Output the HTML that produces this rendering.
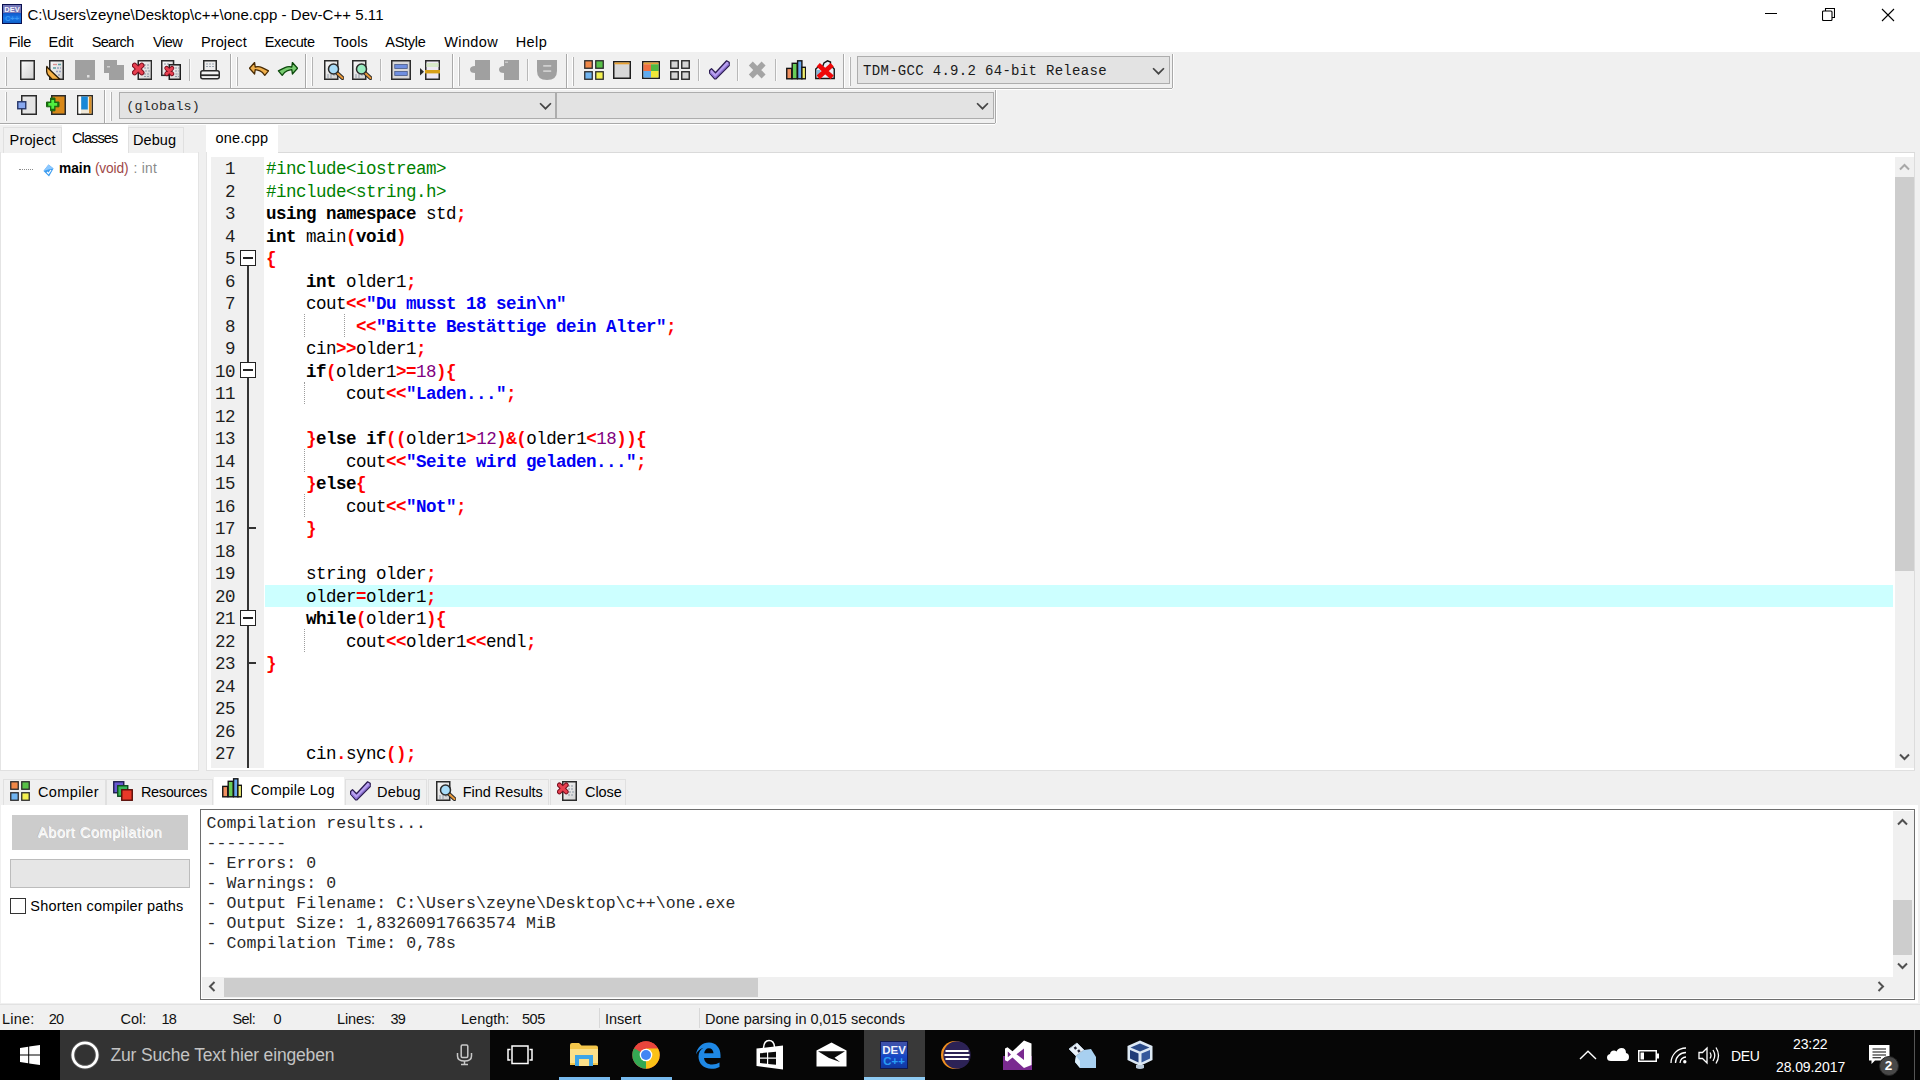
<!DOCTYPE html>
<html>
<head>
<meta charset="utf-8">
<title>Dev-C++</title>
<style>
*{box-sizing:border-box;margin:0;padding:0}
html,body{width:1920px;height:1080px;overflow:hidden;background:#f0f0f0;font-family:"Liberation Sans",sans-serif;color:#000}
.abs{position:absolute}
#titlebar{position:absolute;left:0;top:0;width:1920px;height:30px;background:#fff}
#menubar{position:absolute;left:0;top:30px;width:1920px;height:22px;background:#fff}
.t{position:absolute;white-space:pre;font-size:14.5px;line-height:18px;color:#000}
.combo{position:absolute;background:#e3e3e3;border:1px solid #adadad;font-family:"Liberation Mono",monospace;white-space:nowrap}
#leftpanel{position:absolute;left:1px;top:153px;width:197px;height:617px;background:#fff}
#editor{position:absolute;left:207px;top:153px;width:1707px;height:617px;background:#fff}
#gutter{position:absolute;left:211px;top:157px;width:53px;height:611px;background:#f0f0f0}
.ln{position:absolute;left:0;width:1627px;height:22.5px;font-family:"Liberation Mono",monospace;font-size:17.5px;letter-spacing:-0.5px;line-height:22.5px;white-space:pre}
.no{position:absolute;left:-55px;top:1.2px;width:24px;text-align:right;color:#1e1e1e}
.code{position:absolute;left:0;top:1.2px}
.k{font-weight:bold}
.s{color:#f00;font-weight:bold}
.p{color:#008000}
.q{color:#0000f4;font-weight:bold}
.n{color:#800080}
#taskbar{position:absolute;left:0;top:1030px;width:1920px;height:50px;background:#060606}
#statusbar{position:absolute;left:0;top:1005px;width:1920px;height:25px;background:#f0f0f0}
.log{position:absolute;left:206.5px;font-family:"Liberation Mono",monospace;font-size:16.5px;letter-spacing:0.08px;line-height:20px;white-space:pre;color:#2a2a2a}
</style>
</head>
<body>

<!-- TITLE + MENU -->
<div id="titlebar"></div><div id="menubar"></div>
<svg class="abs" style="left:2px;top:4px" width="20" height="20" viewBox="0 0 20 20"><defs><linearGradient id="gdev" x1="0" y1="0" x2="0" y2="1"><stop offset="0" stop-color="#1058c8"/><stop offset="0.5" stop-color="#1878e8"/><stop offset="1" stop-color="#1060c8"/></linearGradient></defs><rect width="20" height="20" fill="#0a1050"/><rect x="1" y="1" width="18" height="8" fill="#7478b8"/><rect x="1" y="9" width="18" height="10" fill="url(#gdev)"/><text x="10" y="8" font-family="Liberation Sans" font-weight="bold" font-size="7.5" fill="#f4f6ff" text-anchor="middle">DEV</text><text x="10" y="16.500" font-family="Liberation Sans" font-weight="bold" font-size="7.5" fill="#3c98f4" text-anchor="middle">C++</text></svg>
<div class="t" style="left:27.5px;top:6.2px;font-size:15px;letter-spacing:0.04px">C:\Users\zeyne\Desktop\c++\one.cpp - Dev-C++ 5.11</div>
<div class="abs" style="left:1765px;top:13px;width:12px;height:1px;background:#000"></div>
<svg class="abs" style="left:1822px;top:8px" width="13" height="13" viewBox="0 0 13 13"><path d="M3.500 3 V0.5 H12.500 V9.500 H10" fill="none" stroke="#000" stroke-width="1.1"/><rect x="0.5" y="3" width="9.5" height="9.5" rx="1" fill="none" stroke="#000" stroke-width="1.1"/></svg>
<svg class="abs" style="left:1881px;top:8px" width="14" height="14" viewBox="0 0 14 14"><path d="M1 1 L13 13 M13 1 L1 13" stroke="#000" stroke-width="1.1"/></svg>
<div class="t" style="left:8.7px;top:32.6px;letter-spacing:-0.27px">File</div>
<div class="t" style="left:48.5px;top:32.6px;letter-spacing:-0.05px">Edit</div>
<div class="t" style="left:91.7px;top:32.6px;letter-spacing:-0.68px">Search</div>
<div class="t" style="left:153px;top:32.6px;letter-spacing:-0.47px">View</div>
<div class="t" style="left:201px;top:32.6px;letter-spacing:0.1px">Project</div>
<div class="t" style="left:264.8px;top:32.6px;letter-spacing:-0.35px">Execute</div>
<div class="t" style="left:333.3px;top:32.6px;letter-spacing:0.15px">Tools</div>
<div class="t" style="left:385.3px;top:32.6px;letter-spacing:-0.27px">AStyle</div>
<div class="t" style="left:444.2px;top:32.6px;letter-spacing:0.4px">Window</div>
<div class="t" style="left:515.7px;top:32.6px;letter-spacing:0.41px">Help</div>

<!-- TOOLBARS -->
<svg width="0" height="0" style="position:absolute">
<defs>
<linearGradient id="gpage" x1="0" y1="0" x2="1" y2="1"><stop offset="0" stop-color="#fafafa"/><stop offset="1" stop-color="#cfcfcf"/></linearGradient>
<symbol id="i-new" viewBox="0 0 20 20"><rect x="0.75" y="0.75" width="13.5" height="18.5" fill="url(#gpage)" stroke="#2b2b2b" stroke-width="1.5"/></symbol>
<symbol id="i-open" viewBox="0 0 20 20"><rect x="3.750" y="0.750" width="13.500" height="18.500" fill="url(#gpage)" stroke="#2b2b2b" stroke-width="1.500"/><path d="M7 4.500h4" stroke="#d89090" stroke-width="1.300"/><path d="M12 4.500h3M7 8h3" stroke="#58a0a0" stroke-width="1.300"/><path d="M11 8h4M10 11.500h5M12 15h3" stroke="#98a0c0" stroke-width="1.300" stroke-dasharray="2 1"/><path d="M0.800 6.500 Q0 11 1.500 14.500 L6 19.300 L13.800 19.300 L2.200 8.200 Z" fill="#f4b048" stroke="#2a1a04" stroke-width="1.300" stroke-linejoin="round"/></symbol>
<symbol id="i-save" viewBox="0 0 20 20"><rect x="0" y="0" width="20" height="20" fill="#a0a0a0"/><rect x="12" y="15" width="2.5" height="2.5" fill="#e0e0e0"/></symbol>
<symbol id="i-saveall" viewBox="0 0 20 20"><rect x="0" y="0" width="13" height="13" fill="#a0a0a0"/><rect x="5" y="5" width="15" height="15" fill="#a0a0a0"/><rect x="3" y="6" width="3" height="1.5" fill="#d0d0d0"/></symbol>
<symbol id="i-close" viewBox="0 0 20 20"><rect x="6.250" y="0.750" width="13.200" height="18.500" fill="url(#gpage)" stroke="#2b2b2b" stroke-width="1.500"/><path d="M12 5h6M12 8h6M13 11h5M12 14h6M12 16.500h6" stroke="#8e9aa8" stroke-width="1.200" stroke-dasharray="2 1"/><path d="M2.600 5.400 L9.800 12.600 M9.800 5.400 L2.600 12.600" stroke="#7a1020" stroke-width="5.400" stroke-linecap="round"/><path d="M2.600 5.400 L9.800 12.600 M9.800 5.400 L2.600 12.600" stroke="#e84050" stroke-width="3.400" stroke-linecap="round"/></symbol>
<symbol id="i-closeall" viewBox="0 0 20 20"><rect x="0.750" y="0.750" width="11.800" height="14.600" fill="url(#gpage)" stroke="#2b2b2b" stroke-width="1.500"/><path d="M3 4h6" stroke="#8e9aa8" stroke-width="1.100" stroke-dasharray="2 1"/><rect x="8.300" y="4.800" width="11" height="14.500" fill="url(#gpage)" stroke="#1e1e1e" stroke-width="1.500"/><path d="M14 8h4M14 11h4M14.500 14h3.500M14 16.500h4" stroke="#8e9aa8" stroke-width="1.100" stroke-dasharray="2 1"/><path d="M5.600 8.200 L11 13.800 M11 8.200 L5.600 13.800" stroke="#7a1020" stroke-width="4.600" stroke-linecap="round"/><path d="M5.600 8.200 L11 13.800 M11 8.200 L5.600 13.800" stroke="#e84050" stroke-width="2.800" stroke-linecap="round"/></symbol>
<symbol id="i-print" viewBox="0 0 20 20"><rect x="3.75" y="0.75" width="12.5" height="10" fill="#ececec" stroke="#2b2b2b" stroke-width="1.5"/><path d="M6 4h8M6 6.5h8" stroke="#9aa4b0" stroke-width="1.1" stroke-dasharray="2 1"/><rect x="0.75" y="10.75" width="18.5" height="8" rx="2" fill="#f4f4f4" stroke="#2b2b2b" stroke-width="1.5"/><path d="M1 15.2h18" stroke="#2b2b2b" stroke-width="1.8"/></symbol>
<symbol id="i-undo" viewBox="0 0 20 14"><path d="M0.4 6.200 L5.600 0.500 L6.200 5 Q10 4.200 13 5.600 T19.600 8.800 L15.800 13.300 Q13.500 9.600 11 8.800 T6.200 7.600 L5.600 12 Z" fill="#f0b04c" stroke="#4a2c04" stroke-width="1.300" stroke-linejoin="round"/></symbol>
<symbol id="i-redo" viewBox="0 0 21 14"><path d="M20.600 6.200 L15.400 0.500 L14.800 5 Q11 4.200 8 5.600 T1.400 8.800 L5.200 13.300 Q7.500 9.600 10 8.800 T14.800 7.600 L15.400 12 Z" fill="#78cc70" stroke="#0c4a0c" stroke-width="1.300" stroke-linejoin="round"/></symbol>
<symbol id="i-find" viewBox="0 0 20 20"><rect x="0.75" y="0.75" width="13" height="18.5" fill="url(#gpage)" stroke="#2b2b2b" stroke-width="1.5"/><path d="M3 15h8M3 17h6" stroke="#8e9aa8" stroke-width="1.2" stroke-dasharray="2 1"/><path d="M12.5 12.5 L18.5 18" stroke="#2b2b2b" stroke-width="4" stroke-linecap="round"/><path d="M12.5 12.5 L18.5 18" stroke="#e89838" stroke-width="2" stroke-linecap="round"/><circle cx="9.5" cy="9" r="5" fill="#a8dcf8" stroke="#2b2b2b" stroke-width="1.5"/></symbol>
<symbol id="i-repl" viewBox="0 0 20 20"><rect x="0.75" y="0.75" width="13" height="18.5" fill="url(#gpage)" stroke="#2b2b2b" stroke-width="1.5"/><path d="M3 15h8M3 17h6" stroke="#8e9aa8" stroke-width="1.2" stroke-dasharray="2 1"/><path d="M12.5 12.5 L18.5 18" stroke="#2b2b2b" stroke-width="4" stroke-linecap="round"/><path d="M12.5 12.5 L18.5 18" stroke="#e89838" stroke-width="2" stroke-linecap="round"/><circle cx="9.5" cy="9" r="5" fill="#98ecc0" stroke="#2b2b2b" stroke-width="1.5"/></symbol>
<symbol id="i-gfunc" viewBox="0 0 20 20"><rect x="0.75" y="0.75" width="18.5" height="18.5" fill="#d8d8d8" stroke="#2b2b2b" stroke-width="1.5"/><rect x="3.75" y="4.5" width="12.5" height="4" fill="#6f8fe0" stroke="#485a88" stroke-width="0.8"/><rect x="3.75" y="11.5" width="12.5" height="4" fill="#6f8fe0" stroke="#485a88" stroke-width="0.8"/></symbol>
<symbol id="i-gline" viewBox="0 0 20 20"><rect x="5.75" y="0.75" width="13.5" height="18.5" fill="#eee8f4" stroke="#2b2b2b" stroke-width="1.5"/><rect x="6.5" y="3" width="12" height="4" fill="#d8e8c8"/><rect x="5" y="10" width="15" height="3.4" fill="#d8a018"/><path d="M0 8 L4 11.7 L0 15.5 Z" fill="#2b2b2b"/></symbol>
<symbol id="i-g1" viewBox="0 0 20 20"><path d="M5 0h15v20H5v-7Q0 13 0 9.5 0 6 5 6Z" fill="#a0a0a0"/></symbol>
<symbol id="i-g2" viewBox="0 0 20 20"><path d="M5 0h15v20H5v-7Q0 13 0 9.5 0 6 5 6Z" fill="#a0a0a0"/><rect x="6" y="1.5" width="3" height="1.5" fill="#c8c8c8"/></symbol>
<symbol id="i-g3" viewBox="0 0 20 20"><path d="M0 0h20v11Q20 20 10 20 0 20 0 11Z" fill="#a0a0a0"/><path d="M6.200 5.800h8M6.200 11.200h8" stroke="#cfcfcf" stroke-width="1.800"/></symbol>
<symbol id="i-comp" viewBox="0 0 20 20"><rect x="0.75" y="0.75" width="7.5" height="7.5" fill="#f08848" stroke="#2b2b2b" stroke-width="1.3"/><rect x="11.75" y="0.75" width="7.500" height="7.5" fill="#58c048" stroke="#2b2b2b" stroke-width="1.3"/><rect x="0.75" y="11.75" width="7.5" height="7.500" fill="#70b4f0" stroke="#2b2b2b" stroke-width="1.3"/><rect x="11.75" y="11.75" width="7.5" height="7.5" fill="#f4f050" stroke="#2b2b2b" stroke-width="1.3"/></symbol>
<symbol id="i-run" viewBox="0 0 18 18"><rect x="0.75" y="0.75" width="16.5" height="16.5" fill="#d8d8d8" stroke="#1e1e1e" stroke-width="1.5"/><rect x="1.5" y="1.5" width="15" height="1.8" fill="#e8a030"/></symbol>
<symbol id="i-crun" viewBox="0 0 18 18"><rect x="0.75" y="0.75" width="16.5" height="16.500" fill="#d8d8d8" stroke="#1e1e1e" stroke-width="1.5"/><rect x="1.5" y="1.5" width="15" height="1.8" fill="#e8a030"/><rect x="1.5" y="3.3" width="7.5" height="6.7" fill="#f07040"/><rect x="9" y="3.3" width="7.5" height="6.7" fill="#50b840"/><rect x="1.5" y="10" width="7.5" height="6.5" fill="#60acf0"/><rect x="9" y="10" width="7.5" height="6.5" fill="#f0e838"/></symbol>
<symbol id="i-reb" viewBox="0 0 20 20"><rect x="0.750" y="0.75" width="7.5" height="7.5" fill="#d4d4d4" stroke="#2b2b2b" stroke-width="1.4"/><rect x="11.75" y="0.75" width="7.5" height="7.5" fill="#d4d4d4" stroke="#2b2b2b" stroke-width="1.4"/><rect x="0.75" y="11.75" width="7.5" height="7.5" fill="#d4d4d4" stroke="#2b2b2b" stroke-width="1.4"/><rect x="11.75" y="11.750" width="7.5" height="7.5" fill="#d4d4d4" stroke="#2b2b2b" stroke-width="1.4"/></symbol>
<symbol id="i-check" viewBox="0 0 21 20"><path d="M0.600 10.500 L2.500 8.600 L6.500 12.800 L17.600 0.800 L20.200 2.200 L20.200 5.500 L7 18.800 L5.600 18.800 L0.600 13 Z" fill="#b8a0f0" stroke="#2a1a50" stroke-width="1.300" stroke-linejoin="round"/><path d="M1 12.600 L6.200 17.600 L20 4" fill="none" stroke="#8a70d0" stroke-width="1.200"/></symbol>
<symbol id="i-gx" viewBox="0 0 18 18"><path d="M2.800 2.600 L15.600 15.400 M15.600 2.600 L2.800 15.400" stroke="#a4a4a4" stroke-width="5.600"/></symbol>
<symbol id="i-bars" viewBox="0 0 20 20"><rect x="0.750" y="8.400" width="5" height="10.400" fill="#f09060" stroke="#141414" stroke-width="1.400"/><rect x="6.200" y="3.300" width="5" height="15.500" fill="#68cc58" stroke="#141414" stroke-width="1.400"/><rect x="11.600" y="0.800" width="4.300" height="18" fill="#68a8f0" stroke="#141414" stroke-width="1.400"/><rect x="15.900" y="7.300" width="3.700" height="11.500" fill="#f0f070" stroke="#141414" stroke-width="1.400"/></symbol>
<symbol id="i-rx" viewBox="0 0 20 20"><path d="M0.750 18.500 V9 L4.500 5.800 L7 8 L9 3 L12.500 0.800 L15.500 2 V5 L19.250 9 V18.500 Z" fill="#e8eef4" stroke="#141414" stroke-width="1.400"/><rect x="1.500" y="10" width="4" height="6" fill="#88b8d8"/><path d="M3.200 4.800 L17.200 17.400 M17.200 4.800 L3.200 17.400" stroke="#ee0808" stroke-width="4.800"/></symbol>
<symbol id="i-chev" viewBox="0 0 12 8"><path d="M1 1 L6 6 L11 1" fill="none" stroke="#444" stroke-width="1.6"/></symbol>
<symbol id="i-t1" viewBox="0 0 20 20"><rect x="4.75" y="0.75" width="14.5" height="18.5" fill="#e4e4e4" stroke="#2b2b2b" stroke-width="1.5"/><rect x="0.75" y="6.75" width="8" height="7" fill="#88a8f0" stroke="#28386a" stroke-width="1.4"/></symbol>
<symbol id="i-t2" viewBox="0 0 20 20"><rect x="5.75" y="0.75" width="13.5" height="18.5" fill="#d88818" stroke="#2b2b2b" stroke-width="1.5"/><path d="M0.500 7 H4.500 V3 H9 V7 H13 V11.800 H9 V15.800 H4.500 V11.800 H0.500 Z" fill="#1a6a10" stroke="#1a6a10" stroke-width="1" stroke-linejoin="round"/><path d="M2.300 9.400 H11.200 M6.750 5 V13.800" stroke="#50f040" stroke-width="2.800"/></symbol>
<symbol id="i-t3" viewBox="0 0 16 20"><rect x="0.75" y="0.75" width="14.5" height="18.5" fill="#f0e8d8" stroke="#2b2b2b" stroke-width="1.5"/><rect x="1.500" y="1.500" width="2.500" height="17" fill="#ffffff"/><rect x="12" y="1.500" width="2.500" height="17" fill="#d89028"/><rect x="4.200" y="1.500" width="6.600" height="13" fill="#1888d8"/></symbol>
<symbol id="i-res" viewBox="0 0 20 20"><rect x="0.75" y="0.75" width="10" height="11" fill="#6858d0" stroke="#1e1e50" stroke-width="1.4"/><rect x="4.75" y="4.75" width="10" height="10.5" fill="#38b858" stroke="#0e4a1e" stroke-width="1.4"/><rect x="8.750" y="8.75" width="10.5" height="10.5" fill="#e83828" stroke="#5a0e08" stroke-width="1.4"/></symbol>
<symbol id="i-close2" viewBox="0 0 20 20"><rect x="5.75" y="0.75" width="13.5" height="18.5" fill="url(#gpage)" stroke="#2b2b2b" stroke-width="1.5"/><path d="M11 5h6M11 8h6M12 11h5M11 14h6" stroke="#8e9aa8" stroke-width="1.2" stroke-dasharray="2 1"/><path d="M2.400 4 L9.200 10.800 M9.200 4 L2.400 10.800" stroke="#7a1020" stroke-width="5" stroke-linecap="round"/><path d="M2.400 4 L9.200 10.800 M9.200 4 L2.400 10.800" stroke="#e84050" stroke-width="3" stroke-linecap="round"/></symbol>
</defs>
</svg>

<div class="abs" style="left:5px;top:57px;width:1px;height:29px;background:#fff"></div>
<div class="abs" style="left:6px;top:57px;width:1px;height:29px;background:#b4b4b4"></div>
<div class="abs" style="left:230px;top:54px;width:1px;height:34px;background:#a9a9a9"></div>
<div class="abs" style="left:231px;top:54px;width:1px;height:34px;background:#fff"></div>
<div class="abs" style="left:236px;top:57px;width:1px;height:29px;background:#fff"></div>
<div class="abs" style="left:237px;top:57px;width:1px;height:29px;background:#b4b4b4"></div>
<div class="abs" style="left:305px;top:54px;width:1px;height:34px;background:#a9a9a9"></div>
<div class="abs" style="left:306px;top:54px;width:1px;height:34px;background:#fff"></div>
<div class="abs" style="left:311px;top:57px;width:1px;height:29px;background:#fff"></div>
<div class="abs" style="left:312px;top:57px;width:1px;height:29px;background:#b4b4b4"></div>
<div class="abs" style="left:452px;top:54px;width:1px;height:34px;background:#a9a9a9"></div>
<div class="abs" style="left:453px;top:54px;width:1px;height:34px;background:#fff"></div>
<div class="abs" style="left:458px;top:57px;width:1px;height:29px;background:#fff"></div>
<div class="abs" style="left:459px;top:57px;width:1px;height:29px;background:#b4b4b4"></div>
<div class="abs" style="left:566px;top:54px;width:1px;height:34px;background:#a9a9a9"></div>
<div class="abs" style="left:567px;top:54px;width:1px;height:34px;background:#fff"></div>
<div class="abs" style="left:572px;top:57px;width:1px;height:29px;background:#fff"></div>
<div class="abs" style="left:573px;top:57px;width:1px;height:29px;background:#b4b4b4"></div>
<div class="abs" style="left:843px;top:54px;width:1px;height:34px;background:#a9a9a9"></div>
<div class="abs" style="left:844px;top:54px;width:1px;height:34px;background:#fff"></div>
<div class="abs" style="left:849px;top:57px;width:1px;height:29px;background:#fff"></div>
<div class="abs" style="left:850px;top:57px;width:1px;height:29px;background:#b4b4b4"></div>
<div class="abs" style="left:1172px;top:54px;width:1px;height:34px;background:#a9a9a9"></div>
<div class="abs" style="left:1173px;top:54px;width:1px;height:34px;background:#fff"></div>
<div class="abs" style="left:0px;top:88px;width:1172px;height:1px;background:#a9a9a9"></div>
<div class="abs" style="left:0px;top:89px;width:1172px;height:1px;background:#fff"></div>
<svg class="abs" style="left:20px;top:60px" width="20" height="20"><use href="#i-new"/></svg>
<svg class="abs" style="left:46px;top:60px" width="20" height="20"><use href="#i-open"/></svg>
<svg class="abs" style="left:75px;top:60px" width="20" height="20"><use href="#i-save"/></svg>
<svg class="abs" style="left:104px;top:60px" width="20" height="20"><use href="#i-saveall"/></svg>
<svg class="abs" style="left:132px;top:60px" width="20" height="20"><use href="#i-close"/></svg>
<svg class="abs" style="left:161px;top:60px" width="20" height="20"><use href="#i-closeall"/></svg>
<div class="abs" style="left:189px;top:59px;width:1px;height:22px;background:#b8b8b8"></div>
<div class="abs" style="left:190px;top:59px;width:1px;height:22px;background:#fafafa"></div>
<svg class="abs" style="left:200px;top:60px" width="20" height="20"><use href="#i-print"/></svg>
<svg class="abs" style="left:249px;top:62px" width="20" height="14"><use href="#i-undo"/></svg>
<svg class="abs" style="left:277px;top:62px" width="21" height="14"><use href="#i-redo"/></svg>
<svg class="abs" style="left:324px;top:60px" width="20" height="20"><use href="#i-find"/></svg>
<svg class="abs" style="left:352px;top:60px" width="20" height="20"><use href="#i-repl"/></svg>
<div class="abs" style="left:380px;top:59px;width:1px;height:22px;background:#b8b8b8"></div>
<div class="abs" style="left:381px;top:59px;width:1px;height:22px;background:#fafafa"></div>
<svg class="abs" style="left:391px;top:60px" width="20" height="20"><use href="#i-gfunc"/></svg>
<svg class="abs" style="left:420px;top:60px" width="20" height="20"><use href="#i-gline"/></svg>
<svg class="abs" style="left:470px;top:60px" width="20" height="20"><use href="#i-g1"/></svg>
<svg class="abs" style="left:499px;top:60px" width="20" height="20"><use href="#i-g2"/></svg>
<div class="abs" style="left:527px;top:59px;width:1px;height:22px;background:#b8b8b8"></div>
<div class="abs" style="left:528px;top:59px;width:1px;height:22px;background:#fafafa"></div>
<svg class="abs" style="left:537px;top:60px" width="20" height="20"><use href="#i-g3"/></svg>
<svg class="abs" style="left:584px;top:60px" width="20" height="20"><use href="#i-comp"/></svg>
<svg class="abs" style="left:613px;top:61px" width="18" height="18"><use href="#i-run"/></svg>
<svg class="abs" style="left:642px;top:61px" width="18" height="18"><use href="#i-crun"/></svg>
<svg class="abs" style="left:670px;top:60px" width="20" height="20"><use href="#i-reb"/></svg>
<div class="abs" style="left:698px;top:59px;width:1px;height:22px;background:#b8b8b8"></div>
<div class="abs" style="left:699px;top:59px;width:1px;height:22px;background:#fafafa"></div>
<svg class="abs" style="left:709px;top:60px" width="21" height="20"><use href="#i-check"/></svg>
<div class="abs" style="left:737px;top:59px;width:1px;height:22px;background:#b8b8b8"></div>
<div class="abs" style="left:738px;top:59px;width:1px;height:22px;background:#fafafa"></div>
<svg class="abs" style="left:748px;top:61px" width="18" height="18"><use href="#i-gx"/></svg>
<div class="abs" style="left:775px;top:59px;width:1px;height:22px;background:#b8b8b8"></div>
<div class="abs" style="left:776px;top:59px;width:1px;height:22px;background:#fafafa"></div>
<svg class="abs" style="left:786px;top:60px" width="20" height="20"><use href="#i-bars"/></svg>
<svg class="abs" style="left:815px;top:60px" width="20" height="20"><use href="#i-rx"/></svg>
<div class="combo" style="left:857px;top:56px;width:313px;height:28px;font-size:14px;letter-spacing:0.31px;line-height:28.5px;padding-left:5px;color:#1a1a1a">TDM-GCC 4.9.2 64-bit Release</div>
<svg class="abs" style="left:1152px;top:67px" width="13" height="9"><use href="#i-chev"/></svg>
<div class="abs" style="left:5px;top:92px;width:1px;height:29px;background:#fff"></div>
<div class="abs" style="left:6px;top:92px;width:1px;height:29px;background:#b4b4b4"></div>
<div class="abs" style="left:104px;top:90px;width:1px;height:33px;background:#a9a9a9"></div>
<div class="abs" style="left:105px;top:90px;width:1px;height:33px;background:#fff"></div>
<div class="abs" style="left:110px;top:92px;width:1px;height:29px;background:#fff"></div>
<div class="abs" style="left:111px;top:92px;width:1px;height:29px;background:#b4b4b4"></div>
<div class="abs" style="left:995px;top:90px;width:1px;height:33px;background:#a9a9a9"></div>
<div class="abs" style="left:996px;top:90px;width:1px;height:33px;background:#fff"></div>
<div class="abs" style="left:0px;top:123px;width:995px;height:1px;background:#a9a9a9"></div>
<div class="abs" style="left:0px;top:124px;width:995px;height:1px;background:#fff"></div>
<svg class="abs" style="left:17px;top:95px" width="20" height="20"><use href="#i-t1"/></svg>
<svg class="abs" style="left:46px;top:95px" width="20" height="20"><use href="#i-t2"/></svg>
<svg class="abs" style="left:77px;top:95px" width="16" height="20"><use href="#i-t3"/></svg>
<div class="combo" style="left:119px;top:92px;width:437px;height:27px;font-size:13.4px;letter-spacing:0.15px;line-height:28px;padding-left:6.300px;color:#2a2a2a">(globals)</div>
<div class="combo" style="left:556px;top:92px;width:438px;height:27px"></div>
<svg class="abs" style="left:539px;top:102px" width="13" height="9"><use href="#i-chev"/></svg>
<svg class="abs" style="left:976px;top:102px" width="13" height="9"><use href="#i-chev"/></svg>

<!-- PANELS -->
<div id="leftpanel"></div><div id="editor"></div><div id="gutter"></div>
<div class="abs" style="left:3px;top:127px;width:59px;height:26px;background:#f0f0f0;border:1px solid #e0e0e0;border-bottom:none"></div>
<div class="abs" style="left:128px;top:127px;width:56px;height:26px;background:#f0f0f0;border:1px solid #e0e0e0;border-bottom:none"></div>
<div class="abs" style="left:62px;top:125px;width:66px;height:28px;background:#fff"></div>
<div class="t" style="left:9.6px;top:131px;letter-spacing:0.15px">Project</div>
<div class="t" style="left:72px;top:128.5px;letter-spacing:-0.89px">Classes</div>
<div class="t" style="left:133px;top:131px;letter-spacing:0.08px">Debug</div>
<div class="abs" style="left:206px;top:124px;width:72px;height:29px;background:#fff"></div>
<div class="t" style="left:215.6px;top:128.5px;letter-spacing:0.14px">one.cpp</div>
<div class="abs" style="left:0;top:152px;width:1px;height:618px;background:#e4e4e4"></div>
<div class="abs" style="left:198px;top:152px;width:1px;height:618px;background:#e4e4e4"></div>
<div class="abs" style="left:206px;top:152px;width:1px;height:618px;background:#e4e4e4"></div>
<div class="abs" style="left:1914px;top:152px;width:1px;height:618px;background:#dcdcdc"></div>
<div class="abs" style="left:278px;top:152px;width:1637px;height:1px;background:#dadada"></div>
<div class="abs" style="left:19px;top:169px;width:14px;height:0;border-top:1px dotted #8a8a8a"></div>
<svg class="abs" style="left:43px;top:163.500px" width="11" height="13" viewBox="0 0 11 13"><path d="M5.5 0.5 L10.500 4.5 L6 12.5 L0.5 7 Z" fill="#3c9cf0"/><path d="M5.5 0.5 L10.5 4.500 L5.500 5.5 L0.5 7 Z" fill="#8cc8ff"/><path d="M4 8 L5.5 9.5 L8 6" stroke="#fff" stroke-width="1.2" fill="none"/></svg>
<div class="abs" style="left:59px;top:160px;font-size:13.75px;line-height:17px;white-space:nowrap"><b>main</b><span style="color:#a04848;margin-left:3.8px;letter-spacing:-0.13px">(void)</span><span style="color:#8a8a8a;margin-left:5px;letter-spacing:0.3px">: int</span></div>
<div class="abs" style="left:0;top:769.500px;width:199px;height:1px;background:#e0e0e0"></div>
<div class="abs" style="left:206px;top:769.500px;width:1709px;height:1px;background:#e0e0e0"></div>

<div class="abs" style="left:247.2px;top:265.1px;width:1.5px;height:502.9px;background:#333"></div>
<div class="abs" style="left:240px;top:249.6px;width:16px;height:16px;border:1.8px solid #222;background:#fff"></div>
<div class="abs" style="left:243px;top:256.9px;width:10px;height:2px;background:#222"></div>
<div class="abs" style="left:240px;top:362.1px;width:16px;height:16px;border:1.8px solid #222;background:#fff"></div>
<div class="abs" style="left:243px;top:369.4px;width:10px;height:2px;background:#222"></div>
<div class="abs" style="left:240px;top:609.6px;width:16px;height:16px;border:1.8px solid #222;background:#fff"></div>
<div class="abs" style="left:243px;top:616.9px;width:10px;height:2px;background:#222"></div>
<div class="abs" style="left:248px;top:527.1px;width:8px;height:1.5px;background:#333"></div>
<div class="abs" style="left:248px;top:662.1px;width:8px;height:1.5px;background:#333"></div>
<div class="abs" style="left:304px;top:314.4px;width:0;height:22.5px;border-left:1px dotted #9c9c9c"></div>
<div class="abs" style="left:344px;top:314.4px;width:0;height:22.5px;border-left:1px dotted #9c9c9c"></div>
<div class="abs" style="left:304px;top:381.9px;width:0;height:22.5px;border-left:1px dotted #9c9c9c"></div>
<div class="abs" style="left:304px;top:449.4px;width:0;height:22.5px;border-left:1px dotted #9c9c9c"></div>
<div class="abs" style="left:304px;top:494.4px;width:0;height:22.5px;border-left:1px dotted #9c9c9c"></div>
<div class="abs" style="left:304px;top:629.4px;width:0;height:22.5px;border-left:1px dotted #9c9c9c"></div>
<div class="abs" style="left:1895px;top:157px;width:19px;height:611px;background:#f0f0f0"></div>
<div class="abs" style="left:1895px;top:177px;width:19px;height:394px;background:#cdcdcd"></div>
<svg class="abs" style="left:1899px;top:163px" width="11" height="8" viewBox="0 0 11 8"><path d="M1 6.5 L5.5 2 L10 6.500" fill="none" stroke="#a8a8a8" stroke-width="2"/></svg>
<svg class="abs" style="left:1899px;top:753px" width="11" height="8" viewBox="0 0 11 8"><path d="M1 1.5 L5.5 6 L10 1.500" fill="none" stroke="#505050" stroke-width="2"/></svg>

<div id="codearea" class="abs" style="left:266px;top:156.9px">
<div class="ln" style="top:0.0px"><span class="no">1</span><span class="code"><span class="p">#include&lt;iostream&gt;</span></span></div>
<div class="ln" style="top:22.5px"><span class="no">2</span><span class="code"><span class="p">#include&lt;string.h&gt;</span></span></div>
<div class="ln" style="top:45.0px"><span class="no">3</span><span class="code"><span class="k">using</span> <span class="k">namespace</span> std<span class="s">;</span></span></div>
<div class="ln" style="top:67.5px"><span class="no">4</span><span class="code"><span class="k">int</span> main<span class="s">(</span><span class="k">void</span><span class="s">)</span></span></div>
<div class="ln" style="top:90.0px"><span class="no">5</span><span class="code"><span class="s">{</span></span></div>
<div class="ln" style="top:112.5px"><span class="no">6</span><span class="code">    <span class="k">int</span> older1<span class="s">;</span></span></div>
<div class="ln" style="top:135.0px"><span class="no">7</span><span class="code">    cout<span class="s">&lt;&lt;</span><span class="q">"Du musst 18 sein\n"</span></span></div>
<div class="ln" style="top:157.5px"><span class="no">8</span><span class="code">         <span class="s">&lt;&lt;</span><span class="q">"Bitte Bestättige dein Alter"</span><span class="s">;</span></span></div>
<div class="ln" style="top:180.0px"><span class="no">9</span><span class="code">    cin<span class="s">&gt;&gt;</span>older1<span class="s">;</span></span></div>
<div class="ln" style="top:202.5px"><span class="no">10</span><span class="code">    <span class="k">if</span><span class="s">(</span>older1<span class="s">&gt;=</span><span class="n">18</span><span class="s">){</span></span></div>
<div class="ln" style="top:225.0px"><span class="no">11</span><span class="code">        cout<span class="s">&lt;&lt;</span><span class="q">"Laden..."</span><span class="s">;</span></span></div>
<div class="ln" style="top:247.5px"><span class="no">12</span><span class="code"></span></div>
<div class="ln" style="top:270.0px"><span class="no">13</span><span class="code">    <span class="s">}</span><span class="k">else</span> <span class="k">if</span><span class="s">((</span>older1<span class="s">&gt;</span><span class="n">12</span><span class="s">)&amp;(</span>older1<span class="s">&lt;</span><span class="n">18</span><span class="s">)){</span></span></div>
<div class="ln" style="top:292.5px"><span class="no">14</span><span class="code">        cout<span class="s">&lt;&lt;</span><span class="q">"Seite wird geladen..."</span><span class="s">;</span></span></div>
<div class="ln" style="top:315.0px"><span class="no">15</span><span class="code">    <span class="s">}</span><span class="k">else</span><span class="s">{</span></span></div>
<div class="ln" style="top:337.5px"><span class="no">16</span><span class="code">        cout<span class="s">&lt;&lt;</span><span class="q">"Not"</span><span class="s">;</span></span></div>
<div class="ln" style="top:360.0px"><span class="no">17</span><span class="code">    <span class="s">}</span></span></div>
<div class="ln" style="top:382.5px"><span class="no">18</span><span class="code"></span></div>
<div class="ln" style="top:405.0px"><span class="no">19</span><span class="code">    string older<span class="s">;</span></span></div>
<div class="abs" style="left:-1px;top:427.9px;width:1628px;height:22.5px;background:#ccffff"></div>
<div class="ln" style="top:427.5px"><span class="no">20</span><span class="code">    older<span class="s">=</span>older1<span class="s">;</span></span></div>
<div class="ln" style="top:450.0px"><span class="no">21</span><span class="code">    <span class="k">while</span><span class="s">(</span>older1<span class="s">){</span></span></div>
<div class="ln" style="top:472.5px"><span class="no">22</span><span class="code">        cout<span class="s">&lt;&lt;</span>older1<span class="s">&lt;&lt;</span>endl<span class="s">;</span></span></div>
<div class="ln" style="top:495.0px"><span class="no">23</span><span class="code"><span class="s">}</span></span></div>
<div class="ln" style="top:517.5px"><span class="no">24</span><span class="code"></span></div>
<div class="ln" style="top:540.0px"><span class="no">25</span><span class="code"></span></div>
<div class="ln" style="top:562.5px"><span class="no">26</span><span class="code"></span></div>
<div class="ln" style="top:585.0px"><span class="no">27</span><span class="code">    cin<span class="s">.</span>sync<span class="s">();</span></span></div>

</div>
<!-- BOTTOM -->
<div class="abs" style="left:1px;top:805px;width:1917px;height:198px;background:#fff"></div>
<div class="abs" style="left:3px;top:779px;width:103px;height:26px;background:#f0f0f0;border:1px solid #e0e0e0;border-bottom:none"></div>
<div class="abs" style="left:106px;top:779px;width:107px;height:26px;background:#f0f0f0;border:1px solid #e0e0e0;border-bottom:none"></div>
<div class="abs" style="left:345px;top:779px;width:82px;height:26px;background:#f0f0f0;border:1px solid #e0e0e0;border-bottom:none"></div>
<div class="abs" style="left:428px;top:779px;width:121px;height:26px;background:#f0f0f0;border:1px solid #e0e0e0;border-bottom:none"></div>
<div class="abs" style="left:550px;top:779px;width:76px;height:26px;background:#f0f0f0;border:1px solid #e0e0e0;border-bottom:none"></div>
<div class="abs" style="left:214px;top:777px;width:130px;height:29px;background:#fff"></div>
<svg class="abs" style="left:10px;top:781px" width="20" height="20"><use href="#i-comp"/></svg>
<div class="t" style="left:38px;top:783px;letter-spacing:0.37px">Compiler</div>
<svg class="abs" style="left:113px;top:781px" width="20" height="20"><use href="#i-res"/></svg>
<div class="t" style="left:141px;top:783px;letter-spacing:-0.38px">Resources</div>
<svg class="abs" style="left:222px;top:778px" width="20" height="20"><use href="#i-bars"/></svg>
<div class="t" style="left:250.6px;top:781px;letter-spacing:0.25px">Compile Log</div>
<svg class="abs" style="left:350px;top:781px" width="21" height="20"><use href="#i-check"/></svg>
<div class="t" style="left:377px;top:783px;letter-spacing:0.23px">Debug</div>
<svg class="abs" style="left:436px;top:781px" width="20" height="20"><use href="#i-find"/></svg>
<div class="t" style="left:462.8px;top:783px;letter-spacing:-0.05px">Find Results</div>
<svg class="abs" style="left:557px;top:781px" width="20" height="20"><use href="#i-close2"/></svg>
<div class="t" style="left:585px;top:783px;letter-spacing:-0.08px">Close</div>
<div class="abs" style="left:11.500px;top:815px;width:176.500px;height:35px;background:#cccccc;color:#f4f4f4;font-size:14.5px;letter-spacing:0.53px;line-height:35px;text-align:center;text-shadow:1px 1px 0 #fff, -0.5px -0.5px 0 #a8a8a8">Abort Compilation</div>
<div class="abs" style="left:10px;top:859px;width:180px;height:29px;background:#e6e6e6;border:1px solid #bcbcbc"></div>
<div class="abs" style="left:10px;top:898px;width:16px;height:16px;background:#fff;border:1.3px solid #333"></div>
<div class="t" style="left:30.3px;top:897px;letter-spacing:0.18px">Shorten compiler paths</div>
<div class="abs" style="left:200px;top:809px;width:1715px;height:191px;background:#fff;border:1.5px solid #6e6e6e"></div>
<div class="log" style="top:814px">Compilation results...</div>
<div class="log" style="top:834px">--------</div>
<div class="log" style="top:854px">- Errors: 0</div>
<div class="log" style="top:874px">- Warnings: 0</div>
<div class="log" style="top:894px">- Output Filename: C:\Users\zeyne\Desktop\c++\one.exe</div>
<div class="log" style="top:914px">- Output Size: 1,83260917663574 MiB</div>
<div class="log" style="top:934px">- Compilation Time: 0,78s</div>
<div class="abs" style="left:1893px;top:811px;width:21px;height:166px;background:#f0f0f0"></div>
<div class="abs" style="left:1893px;top:900px;width:19px;height:55px;background:#cdcdcd"></div>
<svg class="abs" style="left:1897px;top:818px" width="11" height="8" viewBox="0 0 11 8"><path d="M1 6.5 L5.5 2 L10 6.500" fill="none" stroke="#505050" stroke-width="2"/></svg>
<svg class="abs" style="left:1897px;top:962px" width="11" height="8" viewBox="0 0 11 8"><path d="M1 1.5 L5.5 6 L10 1.500" fill="none" stroke="#505050" stroke-width="2"/></svg>
<div class="abs" style="left:202px;top:977px;width:1712px;height:21px;background:#f0f0f0"></div>
<div class="abs" style="left:224px;top:978px;width:534px;height:19px;background:#cdcdcd"></div>
<svg class="abs" style="left:208px;top:981px" width="8" height="11" viewBox="0 0 8 11"><path d="M6.5 1 L2 5.5 L6.5 10" fill="none" stroke="#505050" stroke-width="2"/></svg>
<svg class="abs" style="left:1877px;top:981px" width="8" height="11" viewBox="0 0 8 11"><path d="M1.5 1 L6 5.5 L1.5 10" fill="none" stroke="#505050" stroke-width="2"/></svg>

<!-- STATUS -->
<div id="statusbar"></div>
<div class="abs" style="left:0;top:1004px;width:1920px;height:1px;background:#e2e2e2"></div>
<div class="t" style="left:2px;top:1009.5px;color:#111;letter-spacing:0.2px">Line:</div>
<div class="t" style="left:48.8px;top:1009.5px;color:#111;letter-spacing:-0.8px">20</div>
<div class="t" style="left:120.5px;top:1009.5px;color:#111;letter-spacing:0px">Col:</div>
<div class="t" style="left:161.5px;top:1009.5px;color:#111;letter-spacing:-0.8px">18</div>
<div class="t" style="left:232.5px;top:1009.5px;color:#111;letter-spacing:-0.6px">Sel:</div>
<div class="t" style="left:273.5px;top:1009.5px;color:#111;letter-spacing:0px">0</div>
<div class="t" style="left:337px;top:1009.5px;color:#111;letter-spacing:-0.13px">Lines:</div>
<div class="t" style="left:390.5px;top:1009.5px;color:#111;letter-spacing:-0.8px">39</div>
<div class="t" style="left:461px;top:1009.5px;color:#111;letter-spacing:0px">Length:</div>
<div class="t" style="left:522px;top:1009.5px;color:#111;letter-spacing:-0.5px">505</div>
<div class="t" style="left:605px;top:1009.5px;color:#111;letter-spacing:0px">Insert</div>
<div class="t" style="left:705px;top:1009.5px;color:#111;letter-spacing:0px">Done parsing in 0,015 seconds</div>
<div class="abs" style="left:599px;top:1008px;width:1px;height:20px;background:#d8d8d8"></div>
<div class="abs" style="left:699px;top:1008px;width:1px;height:20px;background:#d8d8d8"></div>

<!-- TASKBAR -->
<div id="taskbar"></div>
<div class="abs" style="left:0;top:1030px;width:60px;height:50px;background:#000"></div>
<svg class="abs" style="left:20px;top:1044.500px" width="20" height="20" viewBox="0 0 20 20"><path d="M0 2.900 L8.2 1.750 V9.500 H0 Z M9.200 1.600 L20 0 V9.500 H9.200 Z M0 10.500 H8.200 V18.250 L0 17.100 Z M9.200 10.500 H20 V20 L9.200 18.400 Z" fill="#fff"/></svg>
<div class="abs" style="left:60px;top:1030px;width:430px;height:50px;background:#333333"></div>
<svg class="abs" style="left:69px;top:1039px" width="32" height="32" viewBox="0 0 32 32"><circle cx="16" cy="16" r="12.2" fill="none" stroke="#666" stroke-width="4.5" opacity="0.55"/><circle cx="16" cy="16" r="12.2" fill="none" stroke="#fff" stroke-width="2.800"/></svg>
<div class="t" style="left:110.5px;top:1044px;font-size:17.5px;line-height:22px;color:#c4c4c4;letter-spacing:-0.16px">Zur Suche Text hier eingeben</div>
<svg class="abs" style="left:456px;top:1044px" width="17" height="22" viewBox="0 0 17 22"><rect x="5.200" y="1" width="6.600" height="12.500" rx="1.200" fill="none" stroke="#c8c8c8" stroke-width="1.500"/><path d="M1.500 9 V12 Q1.500 17 8.500 17 Q15.500 17 15.500 12 V9" fill="none" stroke="#c8c8c8" stroke-width="1.500"/><path d="M8.500 17 V20 M5 20.500 H12" stroke="#c8c8c8" stroke-width="1.500"/></svg>
<svg class="abs" style="left:507px;top:1045px" width="26" height="20" viewBox="0 0 26 20"><rect x="5" y="1" width="16" height="17.500" fill="none" stroke="#fff" stroke-width="1.500"/><path d="M3.500 4.500 H1 V15 H3.500 M22.500 4.500 H25 V15 H22.500" fill="none" stroke="#fff" stroke-width="1.500"/></svg>
<div class="abs" style="left:559px;top:1077px;width:51px;height:3px;background:#76b9ed"></div>
<div class="abs" style="left:621px;top:1077px;width:51px;height:3px;background:#76b9ed"></div>
<div class="abs" style="left:864px;top:1030px;width:61px;height:50px;background:#393939"></div>
<div class="abs" style="left:864px;top:1077px;width:61px;height:3px;background:#8ecbf4"></div>
<svg class="abs" style="left:570px;top:1042px" width="28" height="25" viewBox="0 0 28 25"><path d="M0 3 Q0 1 2 1 H9 L11.500 3.500 H26 Q28 3.500 28 5.500 V22 H0 Z" fill="#f4c64a"/><path d="M0 7 H28 V22 H0 Z" fill="#fbe08a"/><path d="M5 24 V13 H23 V24 Z" fill="#3da5e8"/><path d="M9 24 V17 H19 V24 Z" fill="#fbe08a"/><rect x="0" y="21" width="5" height="2" fill="#f4c64a"/><rect x="23" y="21" width="5" height="2" fill="#f4c64a"/></svg>
<svg class="abs" style="left:632px;top:1041px" width="28" height="28" viewBox="-14 -14 28 28"><circle r="13.700" fill="#e8453c"/><path d="M0 0 L-11.860 -6.850 A13.700 13.700 0 0 0 -0 13.700 L5.930 3.420 Z" fill="#34a853"/><path d="M0 0 L0 13.700 A13.700 13.700 0 0 0 11.860 -6.850 L0 -6.850 Z" fill="#fbc116"/><path d="M-11.860 -6.850 A13.700 13.700 0 0 1 11.860 -6.850 L0 -6.850 Z" fill="#e8453c"/><circle r="6.300" fill="#fff"/><circle r="5" fill="#4285f4"/></svg>
<svg class="abs" style="left:695px;top:1042px" width="26" height="27" viewBox="0 0 26 27"><path d="M1 12.500 C2 5 7.500 0.500 14 0.500 C21 0.500 25.500 6 25.500 13 V16 H9 C9.500 20.500 13 22.500 17 22.500 C20 22.500 22.500 21.800 24.500 20.600 V25 C22 26.300 19.500 26.800 16.500 26.800 C8.500 26.800 3.500 21.500 3.500 14.500 C3.500 10.500 5.500 7.500 8.500 5.700 C5 6.500 2.500 9 1 12.500 Z M9.200 11.300 H18.500 C18.300 8 16.500 6.200 13.800 6.200 C11.200 6.200 9.500 8.200 9.200 11.300 Z" fill="#1e88e5" fill-rule="evenodd"/></svg>
<svg class="abs" style="left:756px;top:1039px" width="28" height="31" viewBox="0 0 28 31"><path d="M7.500 9 Q8 1.500 13 1.500 Q18 1.500 18.500 8" fill="none" stroke="#fff" stroke-width="1.500"/><path d="M0.500 9.500 L27 6.500 V30.500 L0.500 27 Z" fill="#fff"/><path d="M4 14.300 L11 13.600 V18.600 H4 Z M12.200 13.500 L20 12.700 V18.600 H12.200 Z M4 19.800 H11 V24.800 L4 24.100 Z M12.200 19.800 H20 V25.800 L12.200 25 Z" fill="#0b0b0b"/></svg>
<svg class="abs" style="left:816px;top:1042px" width="31" height="25" viewBox="0 0 31 25"><path d="M0.500 8.500 L15.500 0.500 L30.500 8.500 V24.500 H0.500 Z" fill="#fff"/><path d="M2 9.300 H29 L18.500 15.800 L24 20 L13 16 Z" fill="#0b0b0b"/></svg>
<svg class="abs" style="left:880px;top:1041px" width="28" height="28" viewBox="0 0 28 28"><defs><linearGradient id="gdev2" x1="0" y1="0" x2="0" y2="1"><stop offset="0" stop-color="#4050a8"/><stop offset="0.480" stop-color="#2050c0"/><stop offset="0.520" stop-color="#1848c8"/><stop offset="1" stop-color="#1038a0"/></linearGradient></defs><rect width="28" height="28" fill="#101850"/><rect x="1" y="1" width="26" height="26" fill="url(#gdev2)"/><text x="14" y="12.500" font-family="Liberation Sans" font-weight="bold" font-size="11.500" fill="#f0f2ff" text-anchor="middle">DEV</text><text x="14" y="24" font-family="Liberation Sans" font-weight="bold" font-size="11.500" fill="#2a9cf4" text-anchor="middle">C++</text></svg>
<svg class="abs" style="left:940px;top:1040px" width="32" height="30" viewBox="0 0 32 30"><circle cx="15" cy="15" r="14" fill="#f09020"/><circle cx="17" cy="15" r="13.700" fill="#2c2255"/><path d="M5.500 11 H28.500 M4.500 15 H29.500 M5.500 19 H28.500" stroke="#fff" stroke-width="2"/></svg>
<svg class="abs" style="left:1003px;top:1040px" width="29" height="30" viewBox="0 0 29 30"><path d="M0 16 H29 V30 H0 Z" fill="#7a2a90"/><path d="M21 0.500 L28.500 3.500 V25 L21 28 L9.500 17.500 L4.500 21.500 L2 20.300 V8.500 L4.500 7.300 L9.500 11.300 Z" fill="#fff"/><path d="M21 8.500 V20 L13.500 14.300 Z M4.800 11.500 V17.300 L8 14.400 Z" fill="#7a2a90"/></svg>
<svg class="abs" style="left:1067px;top:1041px" width="30" height="28" viewBox="0 0 30 28"><path d="M2 8 L10 2 L17 9 L9 15 Z" fill="#e8f0f8" stroke="#b8c8d8" stroke-width="1"/><rect x="7" y="6" width="2.500" height="2.500" fill="#223" transform="rotate(-38 8 7)"/><rect x="10.500" y="9" width="2.500" height="2.500" fill="#223" transform="rotate(-38 11.500 10)"/><path d="M9 15 L17 9 L24 8 L29 16 V27 H13 L8 21 Z" fill="#a8d0f0"/><path d="M13 27 V20 L9 15 L8 21 Z" fill="#d8ecfa"/></svg>
<svg class="abs" style="left:1127px;top:1040px" width="26" height="30" viewBox="0 0 26 30"><path d="M13 0.500 L25.500 6 V20 L13 26 L0.500 20 V6 Z" fill="#dce8f4"/><path d="M13 3.500 L22.500 7.500 L13 11.500 L3.500 7.500 Z" fill="#2a4a88"/><path d="M3 10 L11.500 13.600 V22.500 L3 18.500 Z" fill="#1f3c78"/><path d="M23 10 L14.500 13.600 V22.500 L23 18.500 Z" fill="#34589c"/><path d="M9 25 H17 V28 Q13 30 9 28 Z" fill="#b8c8d8"/></svg>
<svg class="abs" style="left:1579px;top:1050px" width="18" height="10" viewBox="0 0 18 10"><path d="M1 9 L9 1.200 L17 9" fill="none" stroke="#fff" stroke-width="1.400"/></svg>
<svg class="abs" style="left:1607px;top:1048px" width="22" height="13" viewBox="0 0 22 13"><path d="M4 13 Q0 13 0 9.500 Q0 6.500 3 6 Q3.500 2.500 7 2.500 Q8.500 2.500 9.500 3.500 Q11 0 14.500 0 Q19 0 19 5 Q22 5.500 22 9 Q22 13 18 13 Z" fill="#fff"/></svg>
<svg class="abs" style="left:1638px;top:1049.500px" width="21" height="12" viewBox="0 0 21 12"><rect x="0.750" y="0.750" width="17.500" height="10.500" fill="none" stroke="#fff" stroke-width="1.500"/><rect x="19" y="3.500" width="2" height="5" fill="#fff"/><rect x="2.500" y="2.500" width="3.500" height="7" fill="#fff"/></svg>
<svg class="abs" style="left:1670px;top:1047px" width="18" height="17" viewBox="0 0 18 17"><path d="M1 16 A15 15 0 0 1 16 1" fill="none" stroke="#fff" stroke-width="1.300"/><path d="M5.500 16 A10.500 10.500 0 0 1 16 5.500" fill="none" stroke="#fff" stroke-width="1.300"/><path d="M10 16 A6 6 0 0 1 16 10" fill="none" stroke="#fff" stroke-width="1.300"/><circle cx="14.800" cy="14.800" r="1.700" fill="#fff"/></svg>
<svg class="abs" style="left:1698px;top:1045.500px" width="22" height="19" viewBox="0 0 22 19"><path d="M1 6.500 H4.500 L9 2 V17 L4.500 12.500 H1 Z" fill="none" stroke="#fff" stroke-width="1.300"/><path d="M12 6.500 Q14 9.500 12 12.500 M15 4 Q18.500 9.500 15 15 M18 1.500 Q23 9.500 18 17.500" fill="none" stroke="#fff" stroke-width="1.300"/></svg>
<div class="t" style="left:1731px;top:1046.500px;font-size:14px;color:#fff;letter-spacing:-0.4px">DEU</div>
<div class="t" style="left:1793px;top:1034.500px;font-size:14px;color:#fff;letter-spacing:-0.1px">23:22</div>
<div class="t" style="left:1776px;top:1057.500px;font-size:14px;color:#fff;letter-spacing:-0.1px">28.09.2017</div>
<svg class="abs" style="left:1869px;top:1045px" width="21" height="19" viewBox="0 0 21 19"><path d="M0 0 H20.500 V15.500 H6 L2.500 19 V15.500 H0 Z" fill="#fff"/><path d="M3.500 4 H17 M3.500 7 H17 M3.500 10 H17 M3.500 12.800 H12" stroke="#0b0b0b" stroke-width="1.100"/></svg>
<div class="abs" style="left:1878.500px;top:1055.500px;width:20px;height:20px;border-radius:10px;background:#484848;border:1px solid #222;color:#fff;font-size:13.500px;font-weight:bold;line-height:18px;text-align:center">2</div>
<div class="abs" style="left:1914px;top:1030px;width:1px;height:50px;background:#555"></div>

</body>
</html>
